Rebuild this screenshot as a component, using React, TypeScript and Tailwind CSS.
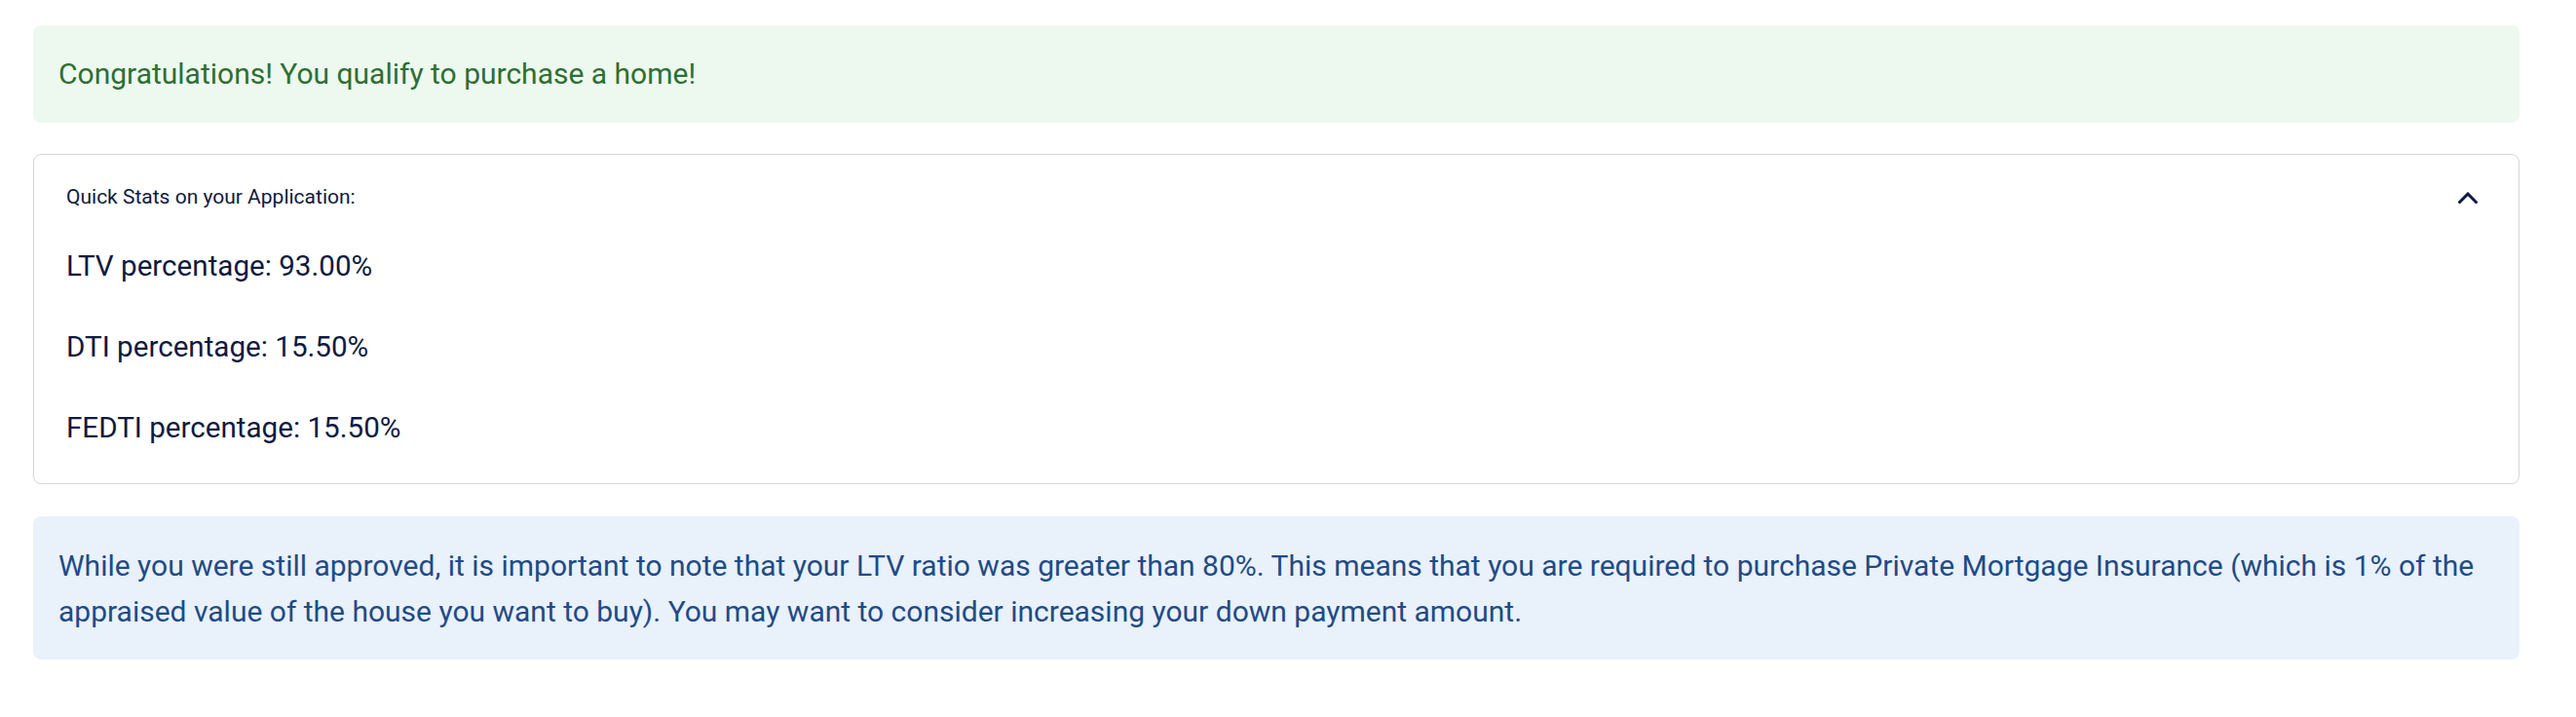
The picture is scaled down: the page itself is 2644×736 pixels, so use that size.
import React from 'react';

const stats = ['LTV percentage: 93.00%', 'DTI percentage: 15.50%', 'FEDTI percentage: 15.50%'];

const ChevronUp: React.FC = () => (
  <svg width="20" height="12" viewBox="0 0 20 12" fill="none">
    <polyline points="1.5,10.5 10,2 18.5,10.5" stroke="#0e1a3f" strokeWidth="3" strokeLinecap="square" />
  </svg>
);

export default function App() {
  return (
    <div className="min-h-screen bg-white pl-[34px] pr-[58px] pt-[26px] font-['Roboto',sans-serif]">
      {/* Success alert */}
      <div className="flex h-[100px] items-center rounded-[8px] bg-[#edf8ef] px-[26px] text-[30px] leading-[48px] text-[#2e6f33]">
        Congratulations! You qualify to purchase a home!
      </div>

      {/* Expander */}
      <div className="mt-[32px] h-[339px] rounded-[8px] border border-[#d6d6de] text-[#0e1a3f]">
        <div className="flex h-[88px] items-center justify-between pl-[33px] pr-[42px]">
          <span className="text-[21px]">Quick Stats on your Application:</span>
          <ChevronUp />
        </div>
        <div className="flex flex-col gap-[38px] pl-[33px] pt-[4px] text-[29.6px] leading-[45px]">
          {stats.map((s) => (
            <p key={s}>{s}</p>
          ))}
        </div>
      </div>

      {/* Info alert */}
      <div className="mt-[33px] rounded-[8px] bg-[#e9f1fb] px-[26px] pb-[26px] pt-[27px] text-[30px] leading-[47px] text-[#1f4b85]">
        While you were still approved, it is important to note that your LTV ratio was greater than 80%. This means that you are
        required to purchase Private Mortgage Insurance (which is 1% of the appraised value of the house you want to buy). You may
        want to consider increasing your down payment amount.
      </div>
    </div>
  );
}
